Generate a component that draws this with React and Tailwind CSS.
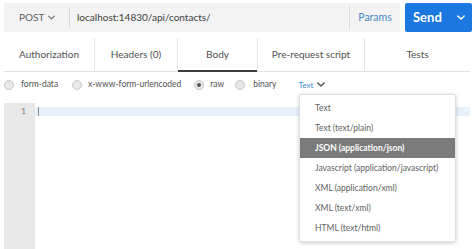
import React from 'react';

const Chevron = ({ className }) => (
    <svg viewBox="0 0 10 6" className={className} fill="none" stroke="currentColor" strokeWidth="1.8" strokeLinecap="round" strokeLinejoin="round">
        <path d="M1 1l4 4 4-4" />
    </svg>
);

const Radio = ({ checked }) => (
    <span className="w-[10px] h-[10px] rounded-full border border-[#c8c8c8] bg-[#e8e8e8] flex items-center justify-center">
        {checked && <span className="w-[4px] h-[4px] rounded-full bg-[#555]" />}
    </span>
);

const tabs = [
    { label: 'Authorization', w: 'w-[90px]' },
    { label: 'Headers (0)', w: 'w-[83px]' },
    { label: 'Body', w: 'w-[80px]', active: true },
    { label: 'Pre-request script', w: 'w-[107px]' },
    { label: 'Tests', w: 'w-[106px]' },
];

const options = [
    'Text',
    'Text (text/plain)',
    'JSON (application/json)',
    'Javascript (application/javascript)',
    'XML (application/xml)',
    'XML (text/xml)',
    'HTML (text/html)',
];

const App = () => {
    return (
        <div className="w-[474px] h-[249px] bg-white overflow-hidden relative font-['Lato','Liberation_Sans',sans-serif] text-[#505050]">
            {/* url bar */}
            <div className="flex pt-[3px] pl-[4px] h-[33px]">
                <div className="flex items-center bg-[#f3f3f3] w-[396px] h-[29px]">
                    <div className="flex items-center w-[65px] pl-[15px] text-[10px] text-[#606060]">
                        POST
                        <Chevron className="w-[7px] h-[5px] ml-[4px] text-[#777]" />
                    </div>
                    <div className="w-px h-[20px] bg-[#d8d8d8]" />
                    <div className="flex-1 pl-[7px] text-[10px] text-[#404040]">localhost:14830/api/contacts/</div>
                    <div className="w-px h-[24px] bg-[#dcdcdc]" />
                    <div className="w-[50px] text-center text-[10.5px] text-[#4a86c8]">Params</div>
                </div>
                <div className="ml-[5px] flex items-center bg-[#1a78e0] rounded-[2px] w-[67px] h-[29px] text-white">
                    <span className="pl-[8px] w-[46px] font-bold text-[13px]">Send</span>
                    <Chevron className="w-[8px] h-[5px] ml-[6px]" />
                </div>
            </div>

            {/* tabs */}
            <div className="flex mt-[5px] mx-[4px] h-[34px] border-b border-[#e2e2e2]">
                {tabs.map((t, i) => (
                    <div key={t.label} className={`${t.w} relative flex items-center justify-center text-[10px] text-[#505050] ${i > 0 ? 'border-l border-[#e4e4e4]' : ''}`}>
                        {t.label}
                        {t.active && <div className="absolute left-0 right-0 bottom-[-1px] h-[2px] bg-[#3c3c3c]" />}
                    </div>
                ))}
            </div>

            {/* body type */}
            <div className="flex items-center h-[25px] mb-[6px] pl-[4px] text-[8.5px] text-[#505050]">
                <Radio />
                <span className="ml-[7px]">form-data</span>
                <span className="ml-[14px]"><Radio /></span>
                <span className="ml-[6px]">x-www-form-urlencoded</span>
                <span className="ml-[13px]"><Radio checked /></span>
                <span className="ml-[6px]">raw</span>
                <span className="ml-[11px]"><Radio /></span>
                <span className="ml-[8px]">binary</span>
                <span className="ml-[22px] text-[8px] text-[#3a8ad4] flex items-center">
                    Text
                    <Chevron className="w-[8px] h-[5px] ml-[4px] text-[#555]" />
                </span>
            </div>

            {/* editor */}
            <div className="flex ml-[4px] h-[146px]">
                <div className="w-[31px] bg-[#e8e8e8] text-[8px] leading-[9px] text-[#777] text-right pr-[9px] pt-[4px]">1</div>
                <div className="flex-1 pt-[4px]">
                    <div className="h-[9px] bg-[#e8f2fc] mr-[4px] flex items-center">
                        <span className="ml-[3px] w-px h-[9px] bg-[#888]" />
                    </div>
                </div>
            </div>

            {/* dropdown */}
            <div className="absolute left-[299px] top-[94px] w-[157px] bg-white border border-[#e0e0e0] rounded-[2px] shadow-[0_1px_4px_rgba(0,0,0,0.2)] py-[3px] text-[8.5px] text-[#606060] whitespace-nowrap">
                {options.map((o) => (
                    <div key={o} className={`h-[20px] flex items-center pl-[15px] ${o.startsWith('JSON') ? 'bg-[#7a7a7a] text-white font-bold' : ''}`}>
                        {o}
                    </div>
                ))}
            </div>
        </div>
    );
};

export default App;
